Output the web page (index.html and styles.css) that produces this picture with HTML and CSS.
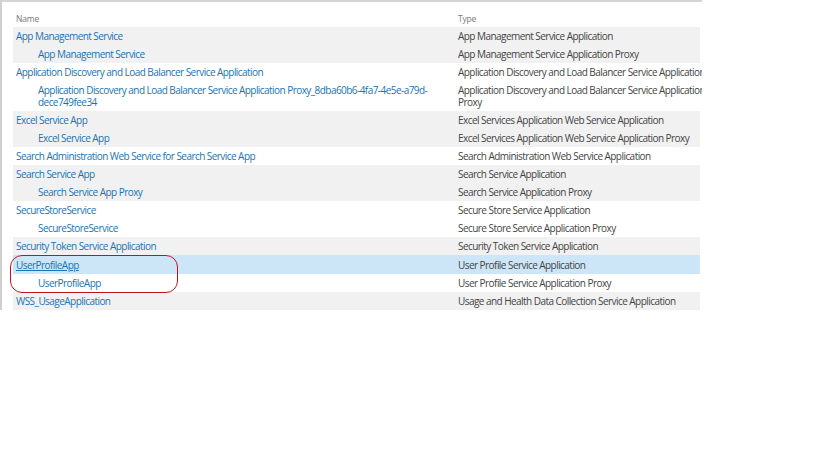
FILE: index.html
```html
<!DOCTYPE html>
<html>
<head>
<meta charset="utf-8">
<link rel="stylesheet" href="styles.css">
</head>
<body>
<div class="frame">
  <div class="list">
    <div class="row head"><div class="c1">Name</div><div class="c2">Type</div></div>
    <div class="row alt"><div class="c1"><a>App Management Service</a></div><div class="c2">App Management Service Application</div></div>
    <div class="row alt"><div class="c1 ind"><a>App Management Service</a></div><div class="c2">App Management Service Application Proxy</div></div>
    <div class="row"><div class="c1"><a>Application Discovery and Load Balancer Service Application</a></div><div class="c2">Application Discovery and Load Balancer Service Application</div></div>
    <div class="row tall"><div class="c1 ind"><a>Application Discovery and Load Balancer Service Application Proxy_8dba60b6-4fa7-4e5e-a79d-<br>dece749fee34</a></div><div class="c2">Application Discovery and Load Balancer Service Application<br>Proxy</div></div>
    <div class="row alt"><div class="c1"><a>Excel Service App</a></div><div class="c2">Excel Services Application Web Service Application</div></div>
    <div class="row alt"><div class="c1 ind"><a>Excel Service App</a></div><div class="c2">Excel Services Application Web Service Application Proxy</div></div>
    <div class="row"><div class="c1"><a>Search Administration Web Service for Search Service App</a></div><div class="c2">Search Administration Web Service Application</div></div>
    <div class="row alt"><div class="c1"><a>Search Service App</a></div><div class="c2">Search Service Application</div></div>
    <div class="row alt"><div class="c1 ind"><a>Search Service App Proxy</a></div><div class="c2">Search Service Application Proxy</div></div>
    <div class="row"><div class="c1"><a>SecureStoreService</a></div><div class="c2">Secure Store Service Application</div></div>
    <div class="row"><div class="c1 ind"><a>SecureStoreService</a></div><div class="c2">Secure Store Service Application Proxy</div></div>
    <div class="row alt"><div class="c1"><a>Security Token Service Application</a></div><div class="c2">Security Token Service Application</div></div>
    <div class="row sel"><div class="c1"><a class="u">UserProfileApp</a></div><div class="c2">User Profile Service Application</div></div>
    <div class="row"><div class="c1 ind"><a>UserProfileApp</a></div><div class="c2">User Profile Service Application Proxy</div></div>
    <div class="row alt"><div class="c1"><a>WSS_UsageApplication</a></div><div class="c2">Usage and Health Data Collection Service Application</div></div>
    <div class="mark"></div>
  </div>
</div>
</body>
</html>
```
FILE: styles.css
```css
html, body { margin: 0; padding: 0; background: #fff; }
body {
  font-family: "Open Sans", "Noto Sans", sans-serif;
  font-size: 10px;
  letter-spacing: -0.55px;
  color: #444;
}
.frame {
  width: 700px;
  height: 308px;
  border-left: 2px solid #cfcfcf;
  border-top: 2px solid #d4d4d4;
  overflow: hidden;
  position: relative;
}
.list {
  margin-left: 11px;
  width: 687px;
  position: relative;
}
.row {
  display: grid;
  grid-template-columns: 442px 1fr;
  line-height: 18px;
  height: 18px;
  white-space: nowrap;
}
.row.head { height: 25px; line-height: 12px; font-size: 8.5px; letter-spacing: -0.2px; color: #777; }
.row.head .c1, .row.head .c2 { padding-top: 11px; }
.row.alt { background: #f1f1f1; }
.row.sel { background: #cde6f7; height: 19px; line-height: 20px; }
.row.tall { height: 30px; line-height: 12px; }
.row.tall .c1, .row.tall .c2 { padding-top: 3px; }
.c1 { padding-left: 3px; }
.c1.ind { padding-left: 25px; }
.c2 { padding-left: 3px; overflow: visible; }
a { color: #1a73b5; text-decoration: none; }
a.u { text-decoration: underline; }
.mark {
  position: absolute;
  left: -3px;
  top: 253px;
  width: 166px;
  height: 36px;
  border: 1.5px solid #c0141c;
  border-radius: 12px;
}
```
